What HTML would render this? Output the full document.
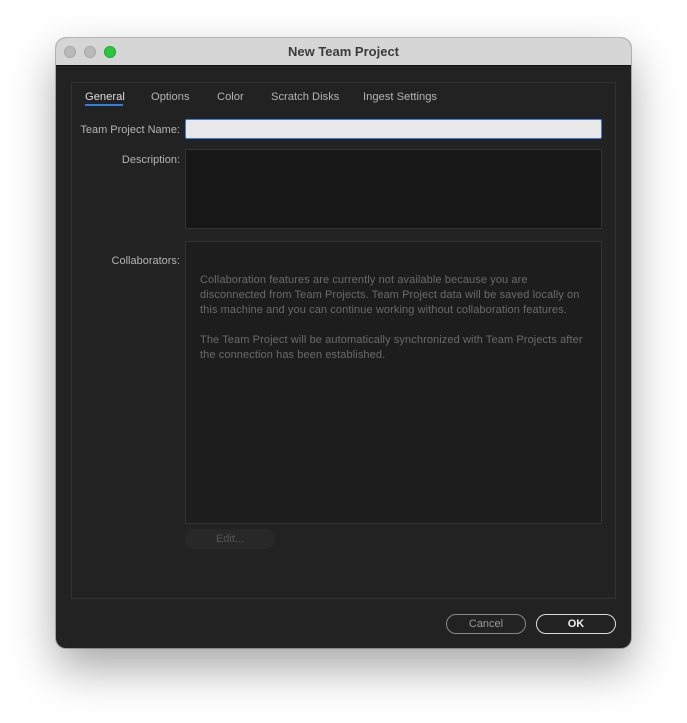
<!DOCTYPE html>
<html><head><meta charset="utf-8"><style>
*{margin:0;padding:0;box-sizing:border-box}
body{width:687px;height:723px;background:#fff;position:relative;overflow:hidden;font-family:"Liberation Sans",sans-serif}
.win{position:absolute;left:56px;top:38px;width:575px;height:610px;border-radius:10px;background:#222;box-shadow:0 20px 45px rgba(0,0,0,.35),0 0 0 1px rgba(0,0,0,.25);overflow:hidden}
.tb{position:absolute;left:0;top:0;width:575px;height:28px;background:#d6d6d6;border-bottom:1px solid #111}
.tb .t{position:absolute;left:0;right:0;top:6px;text-align:center;font-size:13px;font-weight:bold;color:#3a3a3a}
.dot{position:absolute;top:8px;width:12px;height:12px;border-radius:50%;background:#b9b9b9;border:1px solid #a8a8a8}
.panel{position:absolute;left:15px;top:44px;width:545px;height:517px;border:1px solid #333}
.a{position:absolute;font-size:11.2px;color:#b4b4b4;white-space:nowrap}
.lab{position:absolute;font-size:11px;color:#b4b4b4;text-align:right;width:120px;white-space:nowrap}
.box{position:absolute;background:#1b1b1b;border:1px solid #333}
.txt{position:absolute;font-size:11px;color:#6a6a6a;line-height:15px;white-space:nowrap;letter-spacing:.1px}
.btn{position:absolute;height:20px;border-radius:10px;text-align:center;font-size:11px;line-height:18px}
</style></head><body>
<div class="win">
 <div class="tb"><div class="dot" style="left:8px"></div><div class="dot" style="left:28px"></div><div class="dot" style="left:48px;background:#2ac840;border-color:#22a834"></div><div class="t">New Team Project</div></div>
 <div class="panel"></div>
 <div class="a" style="left:29px;top:53px;color:#ddd">General</div>
 <div style="position:absolute;left:29px;top:66px;width:38px;height:2px;background:#2f7fe0"></div>
 <div class="a" style="left:95px;top:53px">Options</div>
 <div class="a" style="left:161px;top:53px">Color</div>
 <div class="a" style="left:215px;top:53px">Scratch Disks</div>
 <div class="a" style="left:307px;top:53px">Ingest Settings</div>
 <div class="lab" style="left:4px;top:86px">Team Project Name:</div>
 <div style="position:absolute;left:129px;top:81px;width:417px;height:20px;background:#e8e8e8;border:1px solid #3a7fd8;border-radius:2px"></div>
 <div class="lab" style="left:4px;top:116px">Description:</div>
 <div class="box" style="left:129px;top:111px;width:417px;height:80px;background:#171717"></div>
 <div class="lab" style="left:4px;top:217px">Collaborators:</div>
 <div class="box" style="left:129px;top:203px;width:417px;height:283px;background:#1d1d1d"></div>
 <div class="txt" style="left:144px;top:235px">Collaboration features are currently not available because you are<br>disconnected from Team Projects. Team Project data will be saved locally on<br>this machine and you can continue working without collaboration features.<br><br>The Team Project will be automatically synchronized with Team Projects after<br>the connection has been established.</div>
 <div class="btn" style="left:129px;top:491px;width:90px;background:#282828;color:#555;line-height:20px">Edit...</div>
 <div class="btn" style="left:390px;top:576px;width:80px;border:1.5px solid #888;color:#999">Cancel</div>
 <div class="btn" style="left:480px;top:576px;width:80px;border:1.5px solid #ddd;color:#eee;font-weight:bold">OK</div>
</div>
</body></html>
